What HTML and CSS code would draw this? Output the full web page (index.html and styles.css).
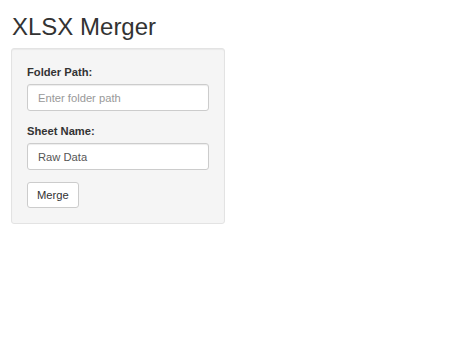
FILE: index.html
```html
<!DOCTYPE html>
<html lang="en">
<head>
    <meta charset="UTF-8">
    <meta name="viewport" content="width=device-width, initial-scale=1.0">
    <title>XLSX Merger</title>
    <link rel="stylesheet" href="styles.css">
</head>
<body>
    <div class="container">
        <h2 class="title">XLSX Merger</h2>
        <div class="well">
            <div class="form-group">
                <label for="folderPath">Folder Path:</label>
                <input type="text" id="folderPath" class="input-field" placeholder="Enter folder path">
            </div>
            <div class="form-group">
                <label for="sheetName">Sheet Name:</label>
                <input type="text" id="sheetName" class="input-field" value="Raw Data">
            </div>
            <button class="button">Merge</button>
        </div>
    </div>
</body>
</html>
```

FILE: styles.css
```css
/* General styling */
body {
    font-family: "Liberation Sans", Arial, sans-serif;
    font-size: 11.2px;
    line-height: 16px;
    color: #333;
    margin: 0;
    background-color: #fff;
}
.container {
    padding: 0 12px 0 11px;
}
.title {
    font-size: 24px;
    font-weight: normal;
    line-height: 26px;
    margin: 14px 0 8px 1px;
}
.well {
    width: 182px;
    padding: 15px;
    background-color: #f5f5f5;
    border: 1px solid #e3e3e3;
    border-radius: 3px;
    box-shadow: inset 0 1px 1px rgba(0, 0, 0, 0.05);
}
.form-group {
    margin-bottom: 12px;
}
label {
    display: block;
    font-weight: bold;
    margin-bottom: 4px;
}
.input-field {
    display: block;
    box-sizing: border-box;
    width: 100%;
    height: 27px;
    padding: 4px 10px;
    font-family: inherit;
    font-size: 11.2px;
    color: #555;
    background-color: #fff;
    border: 1px solid #ccc;
    border-radius: 3px;
    box-shadow: inset 0 1px 1px rgba(0, 0, 0, 0.075);
}
.input-field::placeholder {
    color: #999;
}
.button {
    display: block;
    box-sizing: border-box;
    height: 26px;
    padding: 4px 9px;
    font-family: inherit;
    font-size: 11.2px;
    color: #333;
    background-color: #fff;
    border: 1px solid #ccc;
    border-radius: 3px;
    cursor: pointer;
}
```
